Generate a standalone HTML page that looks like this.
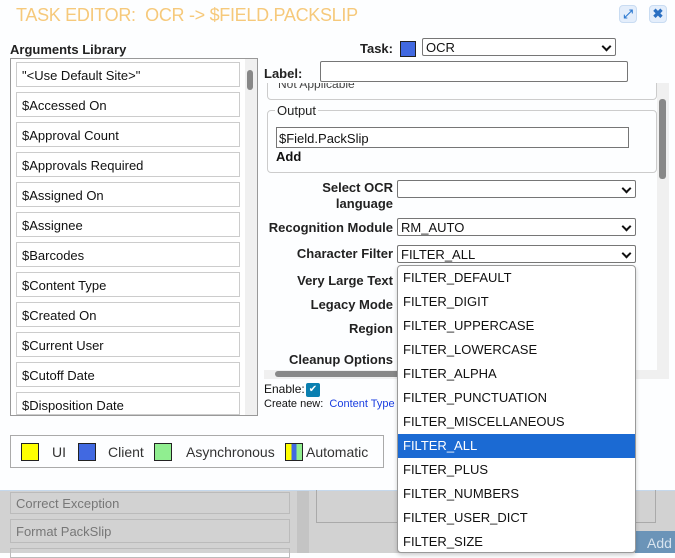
<!DOCTYPE html>
<html><head><style>
*{box-sizing:border-box;margin:0;padding:0}
body{width:675px;height:553px;overflow:hidden;position:relative;background:#fdfeff;font-family:"Liberation Sans",Arial,sans-serif;font-size:13px;color:#111}
.a{position:absolute}
.it{position:absolute;left:16px;width:224px;height:25px;border:1px solid #ccc;background:#fff;padding:5px 0 0 5px;font-size:13px}
.sel{position:absolute;border:1px solid #767676;border-radius:2px;background:#fff;height:18px;font-size:13px;padding:1px 0 0 3px}
.sel:after{content:"";position:absolute;right:5px;top:4px;width:5px;height:5px;border-right:2px solid #111;border-bottom:2px solid #111;transform:rotate(45deg)}
.lb{position:absolute;right:282px;font-weight:bold;font-size:13px;color:#222;text-align:right}
.dd div{height:24px;padding:4px 0 0 5px;font-size:13px}
.sw{position:absolute;top:7px;width:18px;height:18px;border:1px solid #222}
.lt{position:absolute;top:8px;font-size:14px;color:#333}
</style></head><body>
<div class="a" style="left:16px;top:5px;font-size:18px;color:#f6c97b;letter-spacing:-0.3px">TASK EDITOR:&nbsp; OCR -&gt; $FIELD.PACKSLIP</div>
<div class="a" style="left:619px;top:5px;width:18px;height:18px;border-radius:4px;background:#e4eefb;border:1px solid #c9dcf2;color:#2f7bd1;font-size:12px;text-align:center;line-height:16px;font-weight:bold">⤢</div>
<div class="a" style="left:649px;top:5px;width:18px;height:18px;border-radius:4px;background:#e4eefb;border:1px solid #c9dcf2;color:#2a6fc2;font-size:13px;text-align:center;line-height:16px;font-weight:bold">✖</div>
<div class="a" style="left:10px;top:42px;font-weight:bold;color:#222">Arguments Library</div>
<div class="a" style="left:10px;top:58px;width:248px;height:358px;border:1px solid #999;background:#fff"></div>
<div class="a" style="left:245px;top:59px;width:12px;height:356px;background:#f0f0f0"></div>
<div class="a" style="left:247px;top:70px;width:6px;height:20px;background:#888;border-radius:3px"></div>
<div class="it" style="top:62px">"&lt;Use Default Site&gt;"</div>
<div class="it" style="top:92px">$Accessed On</div>
<div class="it" style="top:122px">$Approval Count</div>
<div class="it" style="top:152px">$Approvals Required</div>
<div class="it" style="top:182px">$Assigned On</div>
<div class="it" style="top:212px">$Assignee</div>
<div class="it" style="top:242px">$Barcodes</div>
<div class="it" style="top:272px">$Content Type</div>
<div class="it" style="top:302px">$Created On</div>
<div class="it" style="top:332px">$Current User</div>
<div class="it" style="top:362px">$Cutoff Date</div>
<div class="it" style="top:392px;height:23px">$Disposition Date</div>
<div class="a" style="left:360px;top:41px;font-weight:bold;color:#222">Task:</div>
<div class="a" style="left:400px;top:41px;width:16px;height:16px;background:#4169e1;border:1px solid #222"></div>
<div class="sel" style="left:422px;top:38px;width:194px;height:18px">OCR</div>
<div class="a" style="left:264px;top:66px;font-weight:bold;color:#222">Label:</div>
<div class="a" style="left:320px;top:61px;width:308px;height:21px;border:1px solid #767676;border-radius:2px;background:#fff"></div>
<div class="a" style="left:264px;top:83px;width:405px;height:296px;overflow:hidden">
 <div class="a" style="left:3px;top:-20px;width:390px;height:37px;border:1px solid #ccc;border-radius:4px;font-size:12px;padding:13px 0 0 10px;color:#444">Not Applicable</div>
 <div class="a" style="left:3px;top:27px;width:390px;height:63px;border:1px solid #ccc;border-radius:4px"></div>
 <div class="a" style="left:11px;top:20px;background:#fdfeff;padding:0 2px;color:#222">Output</div>
 <div class="a" style="left:12px;top:44px;width:353px;height:21px;border:1px solid #767676;background:#fff;padding:3px 0 0 2px">$Field.PackSlip</div>
 <div class="a" style="left:12px;top:66px;font-weight:bold">Add</div>
 <div class="a" style="left:393px;top:0;width:12px;height:296px;background:#f0f0f0"></div>
 <div class="a" style="left:395px;top:16px;width:7px;height:80px;background:#888;border-radius:3px"></div>
 <div class="a" style="left:0;top:287px;width:393px;height:9px;background:#f0f0f0"></div>
 <div class="a" style="left:11px;top:288px;width:140px;height:6px;background:#888;border-radius:3px"></div>
</div>
<div class="lb" style="top:180px;line-height:16px">Select OCR<br>language</div>
<div class="sel" style="left:397px;top:180px;width:239px"></div>
<div class="lb" style="top:220px">Recognition Module</div>
<div class="sel" style="left:397px;top:218px;width:239px">RM_AUTO</div>
<div class="lb" style="top:246px">Character Filter</div>
<div class="sel" style="left:397px;top:245px;width:239px">FILTER_ALL</div>
<div class="lb" style="top:273px">Very Large Text</div>
<div class="lb" style="top:297px">Legacy Mode</div>
<div class="lb" style="top:321px">Region</div>
<div class="lb" style="top:352px">Cleanup Options</div>
<div class="a" style="left:264px;top:382px;font-size:12px">Enable:</div>
<div class="a" style="left:306px;top:383px;width:14px;height:14px;background:#0a7fb0;border-radius:2px;color:#fff;font-size:10px;text-align:center;line-height:14px">✔</div>
<div class="a" style="left:264px;top:398px;font-size:11px">Create new:&nbsp; <span style="color:#1a3ee0">Content Type</span></div>
<div class="a" style="left:10px;top:435px;width:374px;height:33px;border:1px solid #aaa">
<span class="sw" style="left:10px;background:#ff0"></span><span class="lt" style="left:41px">UI</span>
<span class="sw" style="left:67px;background:#4169e1"></span><span class="lt" style="left:97px">Client</span>
<span class="sw" style="left:143px;background:#90ee90"></span><span class="lt" style="left:175px">Asynchronous</span>
<span class="sw" style="left:274px;background:linear-gradient(90deg,#ff0 33%,#4169e1 33% 66%,#90ee90 66%)"></span><span class="lt" style="left:295px">Automatic</span>
</div>
<div class="a" style="left:0;top:490px;width:675px;height:63px;background:#d2d2d2;border-top:1px solid #c5d8ec"></div>
<div class="a" style="left:10px;top:492px;width:280px;height:22px;border:1px solid #bbb;color:#777;padding:3px 0 0 5px;font-size:13px">Correct Exception</div>
<div class="a" style="left:10px;top:519px;width:280px;height:24px;border:1px solid #bbb;color:#777;padding:4px 0 0 5px;font-size:13px">Format PackSlip</div>
<div class="a" style="left:10px;top:548px;width:280px;height:10px;border:1px solid #bbb"></div>
<div class="a" style="left:297px;top:491px;width:12px;height:62px;background:#c4c4c4"></div>
<div class="a" style="left:316px;top:490px;width:340px;height:33px;border:1px solid #aaa;border-top:none"></div>
<div class="a" style="left:635px;top:531px;width:40px;height:22px;background:#6b94b8;color:#d8e4ef;padding:4px 0 0 12px;font-size:14px">Add</div>
<div class="a dd" style="left:397px;top:265px;width:239px;height:288px;background:#fff;border:1px solid #999;border-radius:4px;overflow:hidden;box-shadow:0 2px 4px rgba(0,0,0,.2)">
<div>FILTER_DEFAULT</div><div>FILTER_DIGIT</div><div>FILTER_UPPERCASE</div><div>FILTER_LOWERCASE</div><div>FILTER_ALPHA</div><div>FILTER_PUNCTUATION</div><div>FILTER_MISCELLANEOUS</div><div style="background:#1b6ad3;color:#fff">FILTER_ALL</div><div>FILTER_PLUS</div><div>FILTER_NUMBERS</div><div>FILTER_USER_DICT</div><div>FILTER_SIZE</div>
</div>
</body></html>
